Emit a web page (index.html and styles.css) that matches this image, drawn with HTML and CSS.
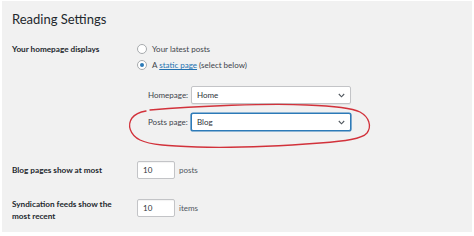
FILE: index.html
```html
<!DOCTYPE html>
<html>
<head>
<meta charset="utf-8">
<link rel="stylesheet" href="styles.css">
</head>
<body>
<div class="panel">
  <h1 class="title">Reading Settings</h1>
  <div class="row row-home">
    <div class="label">Your homepage displays</div>
    <div class="field">
      <label class="radio-line"><input type="radio" name="show" class="radio"><span>Your latest posts</span></label>
      <label class="radio-line"><input type="radio" name="show" class="radio" checked><span>A <a class="link" href="#">static page</a> (select below)</span></label>
      <div class="pages">
        <span class="page-label">Homepage:</span>
        <div class="select-wrap">
          <select class="select"><option>Home</option></select>
          <svg class="chev" width="7" height="5" viewBox="0 0 7 5"><path d="M0.8 1 L3.5 3.8 L6.2 1" fill="none" stroke="#50575e" stroke-width="1.1"/></svg>
        </div>
        <span class="page-label">Posts page:</span>
        <div class="select-wrap">
          <select class="select focused"><option>Blog</option></select>
          <svg class="chev" width="7" height="5" viewBox="0 0 7 5"><path d="M0.8 1 L3.5 3.8 L6.2 1" fill="none" stroke="#50575e" stroke-width="1.1"/></svg>
        </div>
      </div>
    </div>
  </div>
  <div class="row row-blog">
    <div class="label">Blog pages show at most</div>
    <div class="field inline"><input class="num" type="text" value="10"><span class="unit">posts</span></div>
  </div>
  <div class="row row-feed">
    <div class="label two">Syndication feeds show the most recent</div>
    <div class="field inline raise"><input class="num" type="text" value="10"><span class="unit">items</span></div>
  </div>
</div>
<svg class="scribble" width="474" height="236" viewBox="0 0 474 236">
  <path d="M150,110 C195,106 270,103 307,105 C335,106 352,108 360,112 C369,117 372,126 367,133 C362,139 345,141 320,143 C280,146 230,148 197,147 C170,146 150,145 140,140 C130,135 127,125 132,118 C135,114 140,112 146,111" fill="none" stroke="#d2323b" stroke-width="1.3" stroke-linecap="round"/>
</svg>
</body>
</html>
```
FILE: styles.css
```css
html, body {
  margin: 0;
  padding: 0;
  background: #ffffff;
}
body {
  width: 474px;
  height: 236px;
  overflow: hidden;
  position: relative;
  font-family: Lato, "Open Sans", sans-serif;
  font-size: 8px;
  color: #3c434a;
}
.panel {
  margin: 1px 2px 0 2px;
  height: 231px;
  background: #f1f1f1;
  padding-left: 10px;
  box-sizing: border-box;
}
.title {
  margin: 0;
  padding-top: 9px;
  font-size: 13px;
  font-weight: 400;
  line-height: 18px;
  height: 40px;
  box-sizing: border-box;
  color: #23282d;
}
.row {
  display: grid;
  grid-template-columns: 125px 1fr;
}
.label {
  font-weight: 700;
  color: #23282d;
  line-height: 16px;
  font-size: 8.2px;
}
.label.two {
  line-height: 12px;
  width: 105px;
}
.radio-line {
  display: flex;
  align-items: center;
  height: 16px;
  gap: 5px;
  white-space: nowrap;
}
.radio {
  appearance: none;
  -webkit-appearance: none;
  margin: 0;
  width: 10px;
  height: 10px;
  border: 1px solid #a7aaad;
  border-radius: 50%;
  background: #fff;
  box-sizing: border-box;
  position: relative;
  flex: none;
}
.radio:checked::after {
  content: "";
  position: absolute;
  left: 2px;
  top: 2px;
  width: 4px;
  height: 4px;
  border-radius: 50%;
  background: #2c7ab8;
}
.link {
  color: #2271b1;
  text-decoration: underline;
}
.pages {
  display: grid;
  grid-template-columns: 43px 160px;
  row-gap: 9px;
  align-items: center;
  margin: 13px 0 0 11px;
}
.page-label {
  white-space: nowrap;
}
.select-wrap {
  position: relative;
  height: 18px;
}
.select {
  appearance: none;
  -webkit-appearance: none;
  width: 100%;
  height: 18px;
  margin: 0;
  padding: 0 0 0 5px;
  box-sizing: border-box;
  border: 1px solid #c3c4c7;
  border-radius: 2px;
  background: #fff;
  font-family: Lato, "Open Sans", sans-serif;
  font-size: 8px;
  color: #2c3338;
  box-shadow: 0 1px 1px rgba(0,0,0,0.06);
}
.select.focused {
  border-color: #2c7ab8;
  box-shadow: 0 0 0 0.6px #2c7ab8;
}
.chev {
  position: absolute;
  right: 6px;
  top: 7px;
}
.row-blog {
  margin-top: 30px;
}
.row-blog .label {
  line-height: 18px;
}
.row-feed {
  margin-top: 22px;
}
.row-feed .label {
  margin-top: -3px;
}
.field.inline {
  display: flex;
  align-items: center;
  gap: 4px;
  height: 18px;
}
.field.inline.raise {
  margin-top: -2px;
}
.num {
  width: 38px;
  height: 18px;
  margin: 0;
  box-sizing: border-box;
  border: 1px solid #c3c4c7;
  border-radius: 2px;
  padding: 0 0 0 5px;
  background: #fff;
  font-family: Lato, "Open Sans", sans-serif;
  font-size: 8px;
  color: #2c3338;
  box-shadow: inset 0 1px 1px rgba(0,0,0,0.05);
}
.unit {
  color: #50575e;
}
.scribble {
  position: absolute;
  left: 0;
  top: 0;
  pointer-events: none;
}
```
